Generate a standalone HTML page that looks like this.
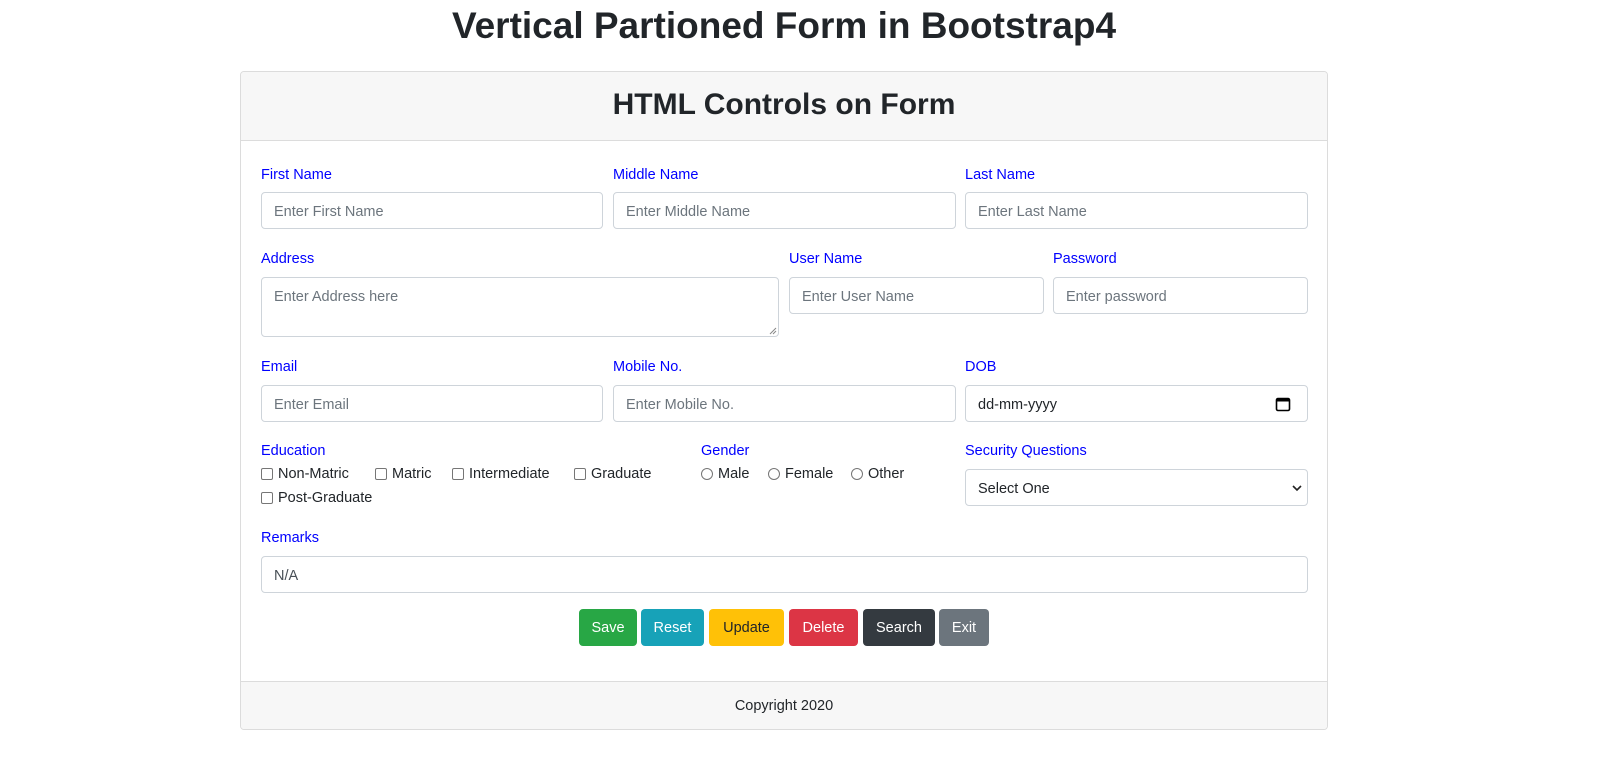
<!DOCTYPE html>
<html><head><meta charset="utf-8"><style>
*{box-sizing:border-box;margin:0;padding:0}
body{width:1600px;height:769px;background:#fff;font-family:"Liberation Sans",sans-serif;color:#212529;position:relative;overflow:hidden}
.a{position:absolute}
h1{position:absolute;left:0;width:1568px;top:3px;text-align:center;font-size:37px;font-weight:bold;line-height:46px}
.card{position:absolute;left:240px;top:71px;width:1088px;height:659px;border:1px solid #dcdcdc;border-radius:4px;overflow:hidden}
.hd{position:absolute;left:0;top:0;width:100%;height:69px;background:#f7f7f7;border-bottom:1px solid #dcdcdc;text-align:center;font-size:30px;font-weight:bold;line-height:66px}
.ft{position:absolute;left:0;bottom:0;width:100%;height:48px;background:#f7f7f7;border-top:1px solid #dcdcdc;text-align:center;font-size:14.5px;line-height:48px}
.l{position:absolute;color:#0000ff;font-size:14.5px;line-height:18px}
.i{position:absolute;border:1px solid #ced4da;border-radius:4px;height:37px;font-size:14.5px;color:#6c757d;padding-left:12px;line-height:39px;background:#fff}
.c{position:absolute;font-size:14.5px;line-height:18px;display:flex;align-items:center;white-space:nowrap}
.cb{display:inline-block;width:12px;height:12px;border:1px solid #767676;border-radius:2px;margin-right:5px}
.rb{display:inline-block;width:12px;height:12px;border:1px solid #767676;border-radius:50%;margin-right:5px}
.b{position:absolute;top:609px;height:37px;border-radius:4px;color:#fff;font-size:14.5px;line-height:39px;text-align:center}
</style></head><body>
<h1>Vertical Partioned Form in Bootstrap4</h1>
<div class="card"><div class="hd">HTML Controls on Form</div><div class="ft">Copyright 2020</div></div>

<div class="l" style="left:261px;top:166px">First Name</div>
<div class="l" style="left:613px;top:166px">Middle Name</div>
<div class="l" style="left:965px;top:166px">Last Name</div>
<div class="i" style="left:261px;top:192px;width:342px">Enter First Name</div>
<div class="i" style="left:613px;top:192px;width:343px">Enter Middle Name</div>
<div class="i" style="left:965px;top:192px;width:343px">Enter Last Name</div>

<div class="l" style="left:261px;top:250px">Address</div>
<div class="l" style="left:789px;top:250px">User Name</div>
<div class="l" style="left:1053px;top:250px">Password</div>
<div class="i" style="left:261px;top:277px;width:518px;height:60px;line-height:38px">Enter Address here
<svg class="a" style="right:1px;bottom:1px" width="8" height="8"><path d="M1 7L7 1M4 7L7 4" stroke="#888" stroke-width="1"/></svg></div>
<div class="i" style="left:789px;top:277px;width:255px">Enter User Name</div>
<div class="i" style="left:1053px;top:277px;width:255px">Enter password</div>

<div class="l" style="left:261px;top:358px">Email</div>
<div class="l" style="left:613px;top:358px">Mobile No.</div>
<div class="l" style="left:965px;top:358px">DOB</div>
<div class="i" style="left:261px;top:385px;width:342px">Enter Email</div>
<div class="i" style="left:613px;top:385px;width:343px">Enter Mobile No.</div>
<div class="i" style="left:965px;top:385px;width:343px;color:#212529">dd-mm-yyyy
<svg class="a" style="left:309px;top:10px" width="16" height="16"><rect x="1.5" y="2.5" width="13" height="12" rx="1.5" fill="none" stroke="#000" stroke-width="1.6"/><rect x="1.5" y="2.5" width="13" height="3" fill="#000"/></svg></div>

<div class="l" style="left:261px;top:442px">Education</div>
<div class="l" style="left:701px;top:442px">Gender</div>
<div class="l" style="left:965px;top:442px">Security Questions</div>
<div class="c" style="left:261px;top:465px"><span class="cb"></span>Non-Matric</div>
<div class="c" style="left:375px;top:465px"><span class="cb"></span>Matric</div>
<div class="c" style="left:452px;top:465px"><span class="cb"></span>Intermediate</div>
<div class="c" style="left:574px;top:465px"><span class="cb"></span>Graduate</div>
<div class="c" style="left:261px;top:489px"><span class="cb"></span>Post-Graduate</div>
<div class="c" style="left:701px;top:465px"><span class="rb"></span>Male</div>
<div class="c" style="left:768px;top:465px"><span class="rb"></span>Female</div>
<div class="c" style="left:851px;top:465px"><span class="rb"></span>Other</div>
<div class="i" style="left:965px;top:469px;width:343px;color:#212529">Select One
<svg class="a" style="left:326px;top:14px" width="10" height="8"><path d="M1 2L5 6L9 2" fill="none" stroke="#222" stroke-width="1.6"/></svg></div>

<div class="l" style="left:261px;top:529px">Remarks</div>
<div class="i" style="left:261px;top:556px;width:1047px;color:#495057">N/A</div>

<div class="b" style="left:579px;width:58px;background:#28a745">Save</div>
<div class="b" style="left:641px;width:63px;background:#17a2b8">Reset</div>
<div class="b" style="left:709px;width:75px;background:#ffc107;color:#212529">Update</div>
<div class="b" style="left:789px;width:69px;background:#dc3545">Delete</div>
<div class="b" style="left:863px;width:72px;background:#343a40">Search</div>
<div class="b" style="left:939px;width:50px;background:#6c757d">Exit</div>
</body></html>
